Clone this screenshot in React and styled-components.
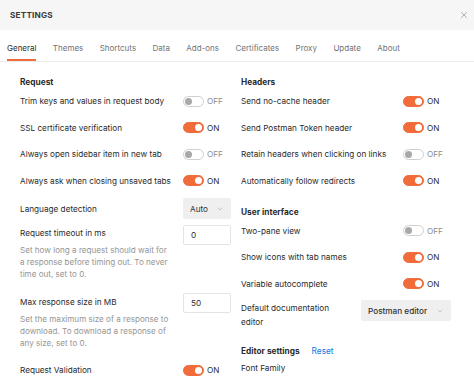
import { createGlobalStyle } from 'styled-components';
import styled from 'styled-components';
import { X, ChevronDown } from 'lucide-react';

const GlobalStyle = createGlobalStyle`
  html, body {
    margin: 0;
    padding: 0;
    background: #ffffff;
  }
  body {
    font-family: Inter, 'Noto Sans', sans-serif;
    color: #2b2b2b;
    -webkit-font-smoothing: antialiased;
  }
`;

const Dialog = styled.div`
  width: 474px;
  height: 380px;
  overflow: hidden;
  background: #ffffff;
`;

const Header = styled.div`
  height: 30px;
  background: #f6f6f6;
  padding: 0 5px 0 10px;
  display: flex;
  align-items: center;
  justify-content: space-between;
`;

const Title = styled.div`
  font-size: 8.2px;
  font-weight: 700;
  letter-spacing: 0.2px;
  color: #3a3a3a;
`;

const CloseButton = styled.div`
  display: flex;
  color: #7a7a7a;
`;

const TabBar = styled.div`
  display: flex;
  padding: 0 7px;
  border-bottom: 1px solid #ececec;
`;

const Tab = styled.div`
  font-size: 8px;
  line-height: 12px;
  padding: 12px 0 5px;
  margin-right: 16.4px;
  color: ${(p) => (p.$active ? '#2b2b2b' : '#737373')};
  border-bottom: 2px solid ${(p) => (p.$active ? '#f26b3a' : 'transparent')};
`;

const Content = styled.div`
  display: grid;
  grid-template-columns: 211px 210px;
  column-gap: 10px;
  padding: 14px 0 0 20px;
`;

const Column = styled.div`
  display: flex;
  flex-direction: column;
`;

const Heading = styled.div`
  display: flex;
  align-items: center;
  gap: 12px;
  font-size: 8.3px;
  font-weight: 700;
  line-height: 12px;
  color: #2b2b2b;
  margin-top: ${(p) => p.$top || 0}px;
`;

const ResetLink = styled.span`
  font-weight: 400;
  color: #0f7be0;
`;

const Row = styled.div`
  display: flex;
  align-items: ${(p) => (p.$top ? 'flex-start' : 'center')};
  justify-content: space-between;
  gap: 8px;
  min-height: ${(p) => (p.$top ? 0 : 26.5)}px;
  margin-top: ${(p) => p.$mt || 0}px;
`;

const LabelBlock = styled.div`
  flex: 1;
  min-width: 0;
  max-width: ${(p) => p.$max || 152}px;
  padding-top: ${(p) => p.$pt || 0}px;
`;

const Label = styled.div`
  font-size: 8.2px;
  line-height: 14px;
  color: #2b2b2b;
`;

const Description = styled.div`
  font-size: 8.1px;
  line-height: 12px;
  color: #959595;
  margin-top: 4px;
`;

const ControlBox = styled.div`
  width: 48px;
  flex: none;
  display: flex;
  align-items: center;
  gap: 3px;
`;

const Track = styled.div`
  width: 21px;
  height: 11px;
  box-sizing: border-box;
  border-radius: 6px;
  position: relative;
  background: ${(p) => (p.$on ? '#f26b3a' : '#ffffff')};
  border: 1px solid ${(p) => (p.$on ? '#f26b3a' : '#cfcfcf')};

  &::after {
    content: '';
    position: absolute;
    top: 1px;
    left: ${(p) => (p.$on ? '11px' : '1px')};
    width: 7px;
    height: 7px;
    border-radius: 50%;
    background: ${(p) => (p.$on ? '#ffffff' : '#a8a8a8')};
  }
`;

const ToggleText = styled.span`
  font-size: 8.2px;
  color: ${(p) => (p.$on ? '#2b2b2b' : '#8c8c8c')};
`;

const Select = styled.div`
  box-sizing: border-box;
  height: 21px;
  width: ${(p) => p.$w || 48}px;
  flex: none;
  background: #efefef;
  border-radius: 2px;
  display: flex;
  align-items: center;
  justify-content: space-between;
  padding: 0 7px 0 7px;
  font-size: 8.2px;
  color: #333333;
  font-weight: ${(p) => (p.$bold ? 500 : 400)};

  svg {
    color: #9a9a9a;
  }
`;

const Input = styled.div`
  box-sizing: border-box;
  width: 48px;
  height: 20px;
  flex: none;
  border: 1px solid #e4e4e4;
  border-radius: 2px;
  padding: 0 7px;
  display: flex;
  align-items: center;
  font-size: 8.2px;
  color: #2b2b2b;
`;

const tabs = ['General', 'Themes', 'Shortcuts', 'Data', 'Add-ons', 'Certificates', 'Proxy', 'Update', 'About'];

const Toggle = ({ on }) => (
  <ControlBox>
    <Track $on={on} />
    <ToggleText $on={on}>{on ? 'ON' : 'OFF'}</ToggleText>
  </ControlBox>
);

const ToggleRow = ({ label, on, mt }) => (
  <Row $mt={mt}>
    <LabelBlock $max={160}>
      <Label>{label}</Label>
    </LabelBlock>
    <Toggle on={on} />
  </Row>
);

export default function App() {
  return (
    <Dialog>
      <GlobalStyle />
      <Header>
        <Title>SETTINGS</Title>
        <CloseButton>
          <X size={10} strokeWidth={1.4} />
        </CloseButton>
      </Header>
      <TabBar>
        {tabs.map((t) => (
          <Tab key={t} $active={t === 'General'}>
            {t}
          </Tab>
        ))}
      </TabBar>
      <Content>
        <Column>
          <Heading>Request</Heading>
          <ToggleRow label="Trim keys and values in request body" on={false} />
          <ToggleRow label="SSL certificate verification" on />
          <ToggleRow label="Always open sidebar item in new tab" on={false} />
          <ToggleRow label="Always ask when closing unsaved tabs" on />
          <Row $top $mt={4}>
            <LabelBlock $pt={3.5}>
              <Label>Language detection</Label>
            </LabelBlock>
            <Select>
              Auto
              <ChevronDown size={8} strokeWidth={1.5} />
            </Select>
          </Row>
          <Row $top $mt={6}>
            <LabelBlock $pt={1}>
              <Label>Request timeout in ms</Label>
              <Description>
                Set how long a request should wait for a response before timing out. To never time out, set to 0.
              </Description>
            </LabelBlock>
            <Input>0</Input>
          </Row>
          <Row $top $mt={13}>
            <LabelBlock $pt={2}>
              <Label>Max response size in MB</Label>
              <Description>
                Set the maximum size of a response to download. To download a response of any size, set to 0.
              </Description>
            </LabelBlock>
            <Input>50</Input>
          </Row>
          <ToggleRow label="Request Validation" on mt={8} />
        </Column>
        <Column>
          <Heading>Headers</Heading>
          <ToggleRow label="Send no-cache header" on />
          <ToggleRow label="Send Postman Token header" on />
          <ToggleRow label="Retain headers when clicking on links" on={false} />
          <ToggleRow label="Automatically follow redirects" on />
          <Heading $top={11.5}>User interface</Heading>
          <ToggleRow label="Two-pane view" on={false} />
          <ToggleRow label="Show icons with tab names" on />
          <ToggleRow label="Variable autocomplete" on />
          <Row $top $mt={3}>
            <LabelBlock $pt={1} $max={112}>
              <Label>Default documentation editor</Label>
            </LabelBlock>
            <Select $w={90} $bold>
              Postman editor
              <ChevronDown size={8} strokeWidth={1.5} />
            </Select>
          </Row>
          <Heading $top={16}>
            Editor settings <ResetLink>Reset</ResetLink>
          </Heading>
          <Row $top $mt={4}>
            <LabelBlock>
              <Label>Font Family</Label>
            </LabelBlock>
          </Row>
        </Column>
      </Content>
    </Dialog>
  );
}
